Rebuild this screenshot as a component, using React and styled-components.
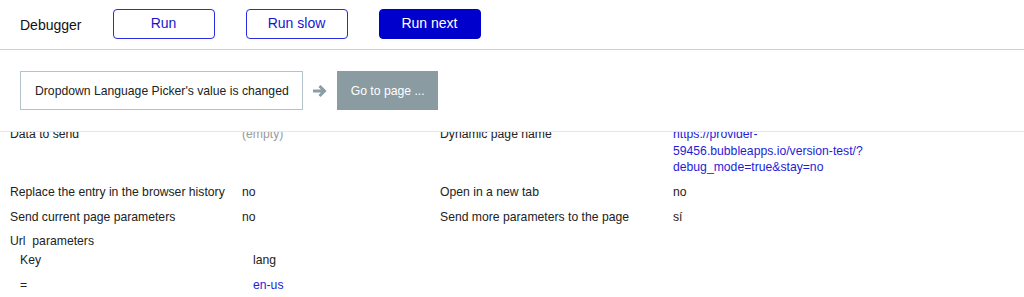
import React from 'react'
import styled, { createGlobalStyle } from 'styled-components'

const GlobalStyle = createGlobalStyle`
  html, body {
    margin: 0;
    padding: 0;
    background: #fff;
    font-family: "Liberation Sans", Arial, sans-serif;
  }
`

// url split where the debugger wraps it
const pageUrl = ['https://provider-', '59456.bubbleapps.io/version-test/?', 'debug_mode=true&stay=no']

const rows = [
  {
    label: 'Data to send',
    value: '(empty)',
    empty: true,
    rightLabel: 'Dynamic page name',
    rightValue: pageUrl,
    link: true,
  },
  {
    label: 'Replace the entry in the browser history',
    value: 'no',
    rightLabel: 'Open in a new tab',
    rightValue: 'no',
  },
  {
    label: 'Send current page parameters',
    value: 'no',
    rightLabel: 'Send more parameters to the page',
    rightValue: 'sí',
  },
]

function renderValue(v) {
  if (!Array.isArray(v)) return v
  return v.map((part, i) => (
    <React.Fragment key={i}>
      <NoWrap>{part}</NoWrap>
      {i < v.length - 1 && <wbr />}
    </React.Fragment>
  ))
}

function App() {
  return (
    <Page>
      <GlobalStyle />
      <Header>
        <Title>Debugger</Title>
        <Button>Run</Button>
        <Button>Run slow</Button>
        <Button $primary>Run next</Button>
      </Header>

      <Events>
        <EventBox>Dropdown Language Picker's value is changed</EventBox>
        <Arrow width="16" height="14" viewBox="0 0 16 14">
          <path d="M1 7h11M7.5 2l5 5-5 5" fill="none" stroke="#8b9ea6" strokeWidth="3" />
        </Arrow>
        <ActionBox>Go to page ...</ActionBox>
      </Events>

      <Details>
        <Table>
          {rows.map((r) => (
            <Row key={r.label}>
              <Label>{r.label}</Label>
              <Value $empty={r.empty}>{r.value}</Value>
              <Label>{r.rightLabel}</Label>
              <Value $link={r.link}>{renderValue(r.rightValue)}</Value>
            </Row>
          ))}
          <SectionTitle>{'Url\u00a0 parameters'}</SectionTitle>
          <SubRow $first>
            <Label>Key</Label>
            <Value>lang</Value>
          </SubRow>
          <SubRow>
            <Label>=</Label>
            <Value $link>en-us</Value>
          </SubRow>
        </Table>
      </Details>
    </Page>
  )
}

export default App

const Page = styled.div`
height: 297px;
display: flex;
flex-direction: column;
overflow: hidden;
color: #222;
`

const Header = styled.div`
height: 49px;
flex-shrink: 0;
display: flex;
align-items: center;
gap: 31px;
padding-left: 20px;
border-bottom: 1px solid #cfcfcf;
box-shadow: 0 1px 0 #f0f0f0;
`

const Title = styled.div`
font-size: 14px;
color: #111;
`

const Button = styled.button`
width: 102px;
height: 30px;
margin-top: -1px;
border-radius: 4px;
font-family: "Liberation Sans", Arial, sans-serif;
font-size: 14px;
padding: 0 0 3px;
cursor: pointer;
border: 1px solid ${(p) => (p.$primary ? '#0000cc' : '#2a2ae0')};
background: ${(p) => (p.$primary ? '#0000cc' : '#fff')};
color: ${(p) => (p.$primary ? '#fff' : '#1515d0')};
`

const Events = styled.div`
height: 81px;
flex-shrink: 0;
display: flex;
align-items: center;
padding-left: 20px;
border-bottom: 1px solid #e6e6e6;
position: relative;
z-index: 1;
background: #fff;
`

const EventBox = styled.div`
height: 37px;
display: flex;
align-items: center;
padding: 0 13px 0 14px;
border: 1px solid #b4c3ca;
font-size: 12.2px;
color: #222;
`

const Arrow = styled.svg`
margin: 0 9px 0 9px;
`

const ActionBox = styled.div`
height: 39px;
width: 101px;
display: flex;
align-items: center;
padding-left: 14px;
box-sizing: border-box;
background: #8a9ba1;
color: #fff;
font-size: 12.2px;
`

const Details = styled.div`
flex: 1;
overflow: hidden;
`

const Table = styled.div`
margin-top: -10px;
padding-left: 10px;
font-size: 12.2px;
line-height: 16.5px;
`

const Row = styled.div`
display: grid;
grid-template-columns: 232px 198px 233px 200px;
padding: 4px 0 4.5px;
`

const Label = styled.div`
color: #222;
`

const Value = styled.div`
color: ${(p) => (p.$link ? '#1d1dd8' : p.$empty ? '#9a9a9a' : '#222')};
`

const NoWrap = styled.span`
white-space: nowrap;
`

const SectionTitle = styled.div`
padding: 3px 0 0.5px;
`

const SubRow = styled.div`
display: grid;
grid-template-columns: 233px 1fr;
padding: ${(p) => (p.$first ? '1.5px' : '4.5px')} 0 4.5px 10px;
`
